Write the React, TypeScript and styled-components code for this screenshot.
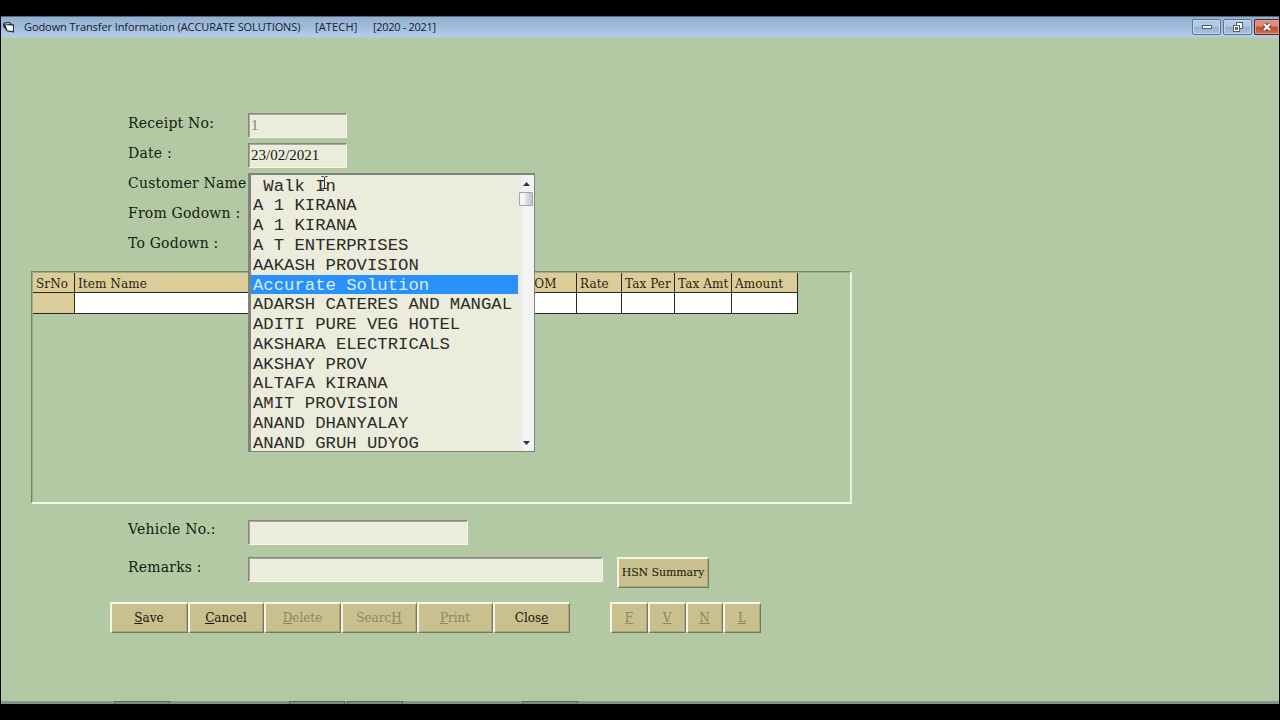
import React from "react";
import styled, { createGlobalStyle } from "styled-components";

const GlobalStyle = createGlobalStyle`
  * { box-sizing: border-box; }
  html, body { margin: 0; padding: 0; background: #000; }
  body { overflow: hidden; }
`;

const serif = `"DejaVu Serif", "Liberation Serif", serif`;

const Screen = styled.div`
  width: 1280px;
  height: 720px;
  padding: 16px 1px;
  background: #000;
  overflow: hidden;
`;

const Window = styled.div`
  height: 688px;
  display: flex;
  flex-direction: column;
  background: #b3c9a3;
`;

const TitleBar = styled.header`
  height: 22px;
  flex: none;
  display: flex;
  align-items: flex-start;
  padding: 2px 0 0 2px;
  border-top: 1px solid #52677c;
  background: linear-gradient(#94b0d0, #a3bedd 55%, #b4cce6 90%, #b5cbc7);
`;

const AppIcon = styled.svg`
  margin-top: 2px;
  flex: none;
`;

const Title = styled.div`
  flex: 1;
  display: flex;
  margin-left: 9px;
  font: 11px/16px "Open Sans", "Noto Sans", sans-serif;
  color: #14202e;
  white-space: pre;
`;

const TitlePart = styled.span<{ $width: number; $spacing: number }>`
  width: ${(p) => p.$width}px;
  letter-spacing: ${(p) => p.$spacing}px;
`;

const Controls = styled.div`
  display: flex;
  gap: 2px;
`;

const Control = styled.button<{ $close?: boolean }>`
  width: ${(p) => (p.$close ? 25 : 29)}px;
  height: 16px;
  padding: 0;
  display: flex;
  align-items: center;
  justify-content: center;
  border: 1px solid ${(p) => (p.$close ? "#5c2420" : "#60748d")};
  border-right-width: ${(p) => (p.$close ? 0 : 1)}px;
  border-radius: ${(p) => (p.$close ? "2px 0 0 2px" : "2px")};
  box-shadow: inset 0 0 0 1px ${(p) => (p.$close ? "#e0a090" : "#c6d9ee")};
  background: ${(p) =>
    p.$close
      ? "linear-gradient(#dc8d7c 45%, #c24a30 50%, #cf6f50)"
      : "linear-gradient(#b4cae4 45%, #94b0d0 50%, #a9c4e0)"};
`;

const Body = styled.main`
  flex: 1;
  padding: 75px 0 0 30px;
`;

const Fields = styled.section`
  display: flex;
  flex-direction: column;
  gap: 4px;
  padding-left: 97px;
`;

const FieldRow = styled.div`
  height: 26px;
  display: flex;
  align-items: flex-start;
`;

const Label = styled.label<{ $line?: number }>`
  width: 120px;
  flex: none;
  font: 14px/${(p) => p.$line ?? 20}px ${serif};
  letter-spacing: 0.2px;
  color: #14200f;
  white-space: nowrap;
`;

const Sunken = styled.div<{ $width: number; $muted?: boolean }>`
  width: ${(p) => p.$width}px;
  height: 25px;
  padding: 0 0 0 2px;
  border: 1px solid;
  border-color: #85897d #f5f7e8 #f5f7e8 #85897d;
  box-shadow: inset 1px 1px 0 #a5a89b;
  background: #ebecdc;
  font: 15px/22px "Liberation Serif", serif;
  color: ${(p) => (p.$muted ? "#81847a" : "#15150f")};
`;

const DropAnchor = styled.div`
  position: relative;
  width: 287px;
`;

const Dropdown = styled.div`
  position: absolute;
  z-index: 2;
  left: 0;
  top: 0;
  width: 287px;
  height: 279px;
  display: flex;
  border: 2px solid #80837b;
  border-left-width: 3px;
  border-bottom-width: 1px;
  border-right-width: 1px;
  background: #ebecdc;
`;

const Options = styled.ul`
  flex: 1;
  margin: 0;
  padding: 0;
  list-style: none;
`;

const Option = styled.li<{ $selected?: boolean }>`
  height: 19.78px;
  padding-left: 2px;
  font: 17.27px/21.6px "Liberation Mono", monospace;
  white-space: pre;
  color: ${(p) => (p.$selected ? "#d8efff" : "#2b2b27")};
  background: ${(p) => (p.$selected ? "#2a90fa" : "transparent")};
  &:first-child { margin-top: 0.7px; }
`;

const ScrollTrack = styled.div`
  width: 16px;
  display: flex;
  flex-direction: column;
  align-items: center;
  background: linear-gradient(90deg, #e7e8e3, #f3f3f1 40%);
`;

const Arrow = styled.svg`
  margin: 7px 0 6px;
  flex: none;
`;

const Thumb = styled.div`
  width: 14px;
  height: 14px;
  border: 1px solid #a3a4a5;
  border-radius: 1px;
  background: linear-gradient(90deg, #f4f4f5 35%, #d6d7da 60%, #c8c9cd);
`;

const Spacer = styled.div`
  flex: 1;
`;

const Caret = styled.svg`
  position: absolute;
  z-index: 3;
  left: 72px;
  top: 2px;
`;

const GridFrame = styled.section`
  width: 821px;
  height: 233px;
  margin-top: 12px;
  border: 2px solid;
  border-width: 1px 2px 2px 1px;
  border-color: #76806e #e9f2df #f3f8ec #76806e;
  box-shadow: inset 1px 1px 0 #9dab91;
  padding: 1px 0 0 1px;
`;

const Table = styled.div`
  display: grid;
  grid-template-columns: 42px 446px 56px 45px 53px 57px 66px;
  width: 765px;
`;

const Cell = styled.div<{ $head?: boolean; $tan?: boolean }>`
  height: ${(p) => (p.$head ? 20 : 21)}px;
  padding-left: 3px;
  border-right: 1px solid #29291f;
  border-bottom: 1px solid #29291f;
  background: ${(p) => (p.$tan ? "#dccd98" : "#fff")};
  font: 12px/22px ${serif};
  letter-spacing: 0.1px;
  color: #29230f;
  white-space: nowrap;
`;

const Lower = styled.section`
  display: flex;
  flex-direction: column;
  gap: 11px;
  padding: 16px 0 0 97px;
`;

const Raised = styled.button<{ $width: number; $small?: boolean }>`
  width: ${(p) => p.$width}px;
  height: 31px;
  flex: none;
  padding: 0 1px 0 0;
  border: 1px solid;
  border-width: 2px 1px 1px 2px;
  border-color: #f4f5e5 #77775f #77775f #f4f5e5;
  box-shadow: inset -1px -1px 0 #aba67e;
  background: #c8c18f;
  font: ${(p) => (p.$small ? "11px" : "12px")} / 28px ${serif};
  letter-spacing: ${(p) => (p.$small ? "-0.1px" : "0")};
  color: #17150c;
  white-space: nowrap;
  &:disabled { color: #8b8666; }
  u { text-underline-offset: 1px; }
`;

const SummarySlot = styled.div`
  margin-left: 14px;
`;

const ButtonBar = styled.div`
  display: flex;
  margin: 19px 0 0 79px;
`;

const NavGroup = styled.div`
  display: flex;
  margin-left: 40px;
`;

const BottomEdge = styled.footer`
  height: 3px;
  flex: none;
  display: flex;
  background: #84938b;
`;

const EdgeTab = styled.div<{ $gap: number }>`
  width: 56px;
  margin-left: ${(p) => p.$gap}px;
  border: 1px solid #5d685e;
  border-width: 1px 1px 0;
  background: #7c8a80;
`;

const options = [
  " Walk In",
  "A 1 KIRANA",
  "A 1 KIRANA",
  "A T ENTERPRISES",
  "AAKASH PROVISION",
  "Accurate Solution",
  "ADARSH CATERES AND MANGAL",
  "ADITI PURE VEG HOTEL",
  "AKSHARA ELECTRICALS",
  "AKSHAY PROV",
  "ALTAFA KIRANA",
  "AMIT PROVISION",
  "ANAND DHANYALAY",
  "ANAND GRUH UDYOG",
];

const columns = ["SrNo", "Item Name", "UOM", "Rate", "Tax Per", "Tax Amt", "Amount"];

export default function App() {
  return (
    <Screen>
      <GlobalStyle />
      <Window>
        <TitleBar>
          <AppIcon width="12" height="12" viewBox="0 0 12 12">
            <path d="M0 2.8 1.2 1.4 6.5.8 8 2.6l3 .8v8L4 10.6 0 5.2z" fill="#24343c" />
            <path d="M2.6 4.2 9.8 4.6l.2 5.4-5.4-.6z" fill="#fff" />
            <path d="M1.2 2.8 6.2 2l.6 1-4.6.4z" fill="#cfe6ea" />
          </AppIcon>
          <Title>
            <TitlePart $width={291} $spacing={-0.08}>Godown Transfer Information (ACCURATE SOLUTIONS)</TitlePart>
            <TitlePart $width={58} $spacing={0.15}>[ATECH]</TitlePart>
            <TitlePart $width={80} $spacing={-0.3}>[2020 - 2021]</TitlePart>
          </Title>
          <Controls>
            <Control aria-label="Minimize">
              <svg width="12" height="6">
                <rect x="1.5" y="1.5" width="9" height="3" fill="#fff" stroke="#53606e" />
              </svg>
            </Control>
            <Control aria-label="Restore">
              <svg width="12" height="12" viewBox="0 0 12 12" fill="#fff" stroke="#53606e">
                <rect x="4.5" y="1.5" width="6" height="6" />
                <rect x="1.5" y="4.5" width="6" height="6" />
                <rect x="3.5" y="6.5" width="2" height="2" fill="#8ea7c4" />
              </svg>
            </Control>
            <Control $close aria-label="Close window">
              <svg width="12" height="10" viewBox="0 0 12 10">
                <path d="m3 2 6 6M9 2 3 8" stroke="#6d3a34" strokeWidth="4" />
                <path d="m3 2 6 6M9 2 3 8" stroke="#fff" strokeWidth="2.2" />
              </svg>
            </Control>
          </Controls>
        </TitleBar>
        <Body>
          <Fields>
            <FieldRow>
              <Label>Receipt No:</Label>
              <Sunken $width={99} $muted>1</Sunken>
            </FieldRow>
            <FieldRow>
              <Label>Date :</Label>
              <Sunken $width={99}>23/02/2021</Sunken>
            </FieldRow>
            <FieldRow>
              <Label>Customer Name</Label>
              <DropAnchor>
                <Dropdown>
                  <Options>
                    {options.map((name, i) => (
                      <Option key={i} $selected={i === 5}>{name}</Option>
                    ))}
                  </Options>
                  <ScrollTrack>
                    <Arrow width="7" height="4"><path d="M0 4 3.5 0 7 4z" fill="#333" /></Arrow>
                    <Thumb />
                    <Spacer />
                    <Arrow width="7" height="4"><path d="M0 0h7L3.5 4z" fill="#333" /></Arrow>
                  </ScrollTrack>
                </Dropdown>
                <Caret width="9" height="15" viewBox="0 0 9 15">
                  <path d="M1.5 1.5h2l1 1 1-1h2M4.5 2v11M1.5 13.5h6" fill="none" stroke="#33332e" />
                </Caret>
              </DropAnchor>
            </FieldRow>
            <FieldRow><Label>From Godown :</Label></FieldRow>
            <FieldRow><Label>To Godown :</Label></FieldRow>
          </Fields>
          <GridFrame>
            <Table>
              {columns.map((name) => <Cell key={name} $head $tan>{name}</Cell>)}
              {columns.map((name, i) => <Cell key={name} $tan={i === 0} />)}
            </Table>
          </GridFrame>
          <Lower>
            <FieldRow>
              <Label $line={18}>Vehicle No.:</Label>
              <Sunken $width={220} />
            </FieldRow>
            <FieldRow>
              <Label>Remarks :</Label>
              <Sunken $width={355} />
              <SummarySlot><Raised $width={92} $small>HSN Summary</Raised></SummarySlot>
            </FieldRow>
          </Lower>
          <ButtonBar>
            <Raised $width={78}><u>S</u>ave</Raised>
            <Raised $width={76}><u>C</u>ancel</Raised>
            <Raised $width={77} disabled><u>D</u>elete</Raised>
            <Raised $width={76} disabled>Searc<u>H</u></Raised>
            <Raised $width={76} disabled><u>P</u>rint</Raised>
            <Raised $width={77}>Clos<u>e</u></Raised>
            <NavGroup>
              <Raised $width={38} disabled><u>F</u></Raised>
              <Raised $width={38} disabled><u>V</u></Raised>
              <Raised $width={37} disabled><u>N</u></Raised>
              <Raised $width={38} disabled><u>L</u></Raised>
            </NavGroup>
          </ButtonBar>
        </Body>
        <BottomEdge>
          <EdgeTab $gap={113} />
          <EdgeTab $gap={119} />
          <EdgeTab $gap={2} />
          <EdgeTab $gap={119} />
        </BottomEdge>
      </Window>
    </Screen>
  );
}
